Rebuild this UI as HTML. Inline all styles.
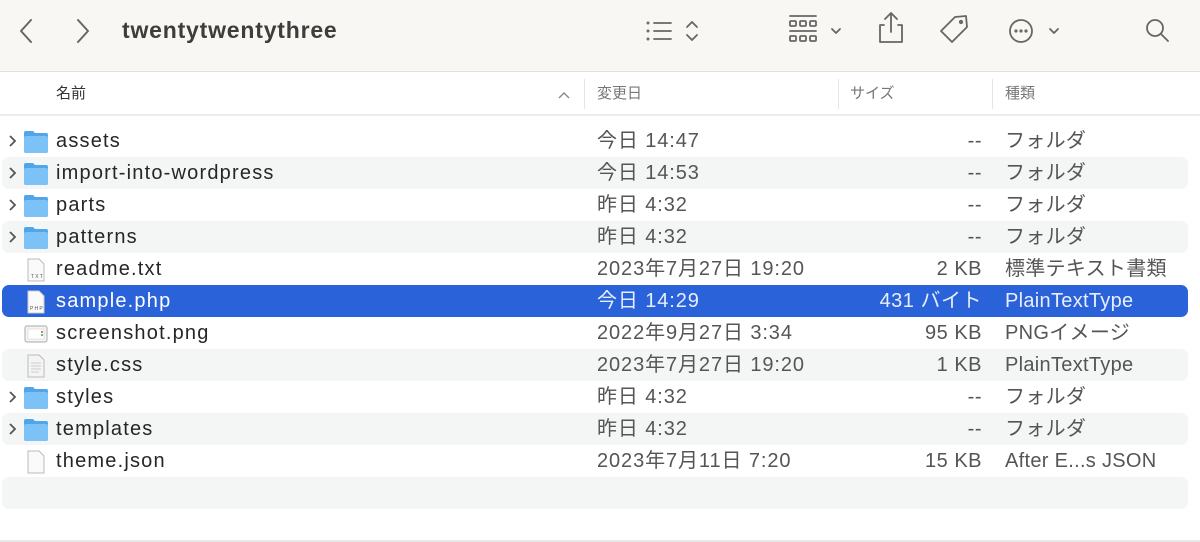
<!DOCTYPE html>
<html><head><meta charset="utf-8">
<style>
*{margin:0;padding:0;box-sizing:border-box}
body{width:1200px;height:542px;background:#fff;font-family:"Liberation Sans","Noto Sans CJK JP",sans-serif;position:relative;overflow:hidden;color:#262626}
.tb{position:absolute;left:0;top:0;width:1200px;height:72px;background:#f9f7f3;border-bottom:1px solid #e2e0dc}
.title{position:absolute;left:122px;top:15px;font-size:23px;letter-spacing:0.8px;font-weight:bold;color:#3d3d3d;line-height:30px}
.hdr{position:absolute;left:0;top:73px;width:1200px;height:43px;border-bottom:2px solid #ececec;font-size:15px}
.hdr span{position:absolute;top:1px;line-height:40px}
.sep{position:absolute;top:6px;width:1px;height:30px;background:#e4e4e4}
.row{position:absolute;left:2px;width:1186px;height:32px;border-radius:7px;font-size:20px;letter-spacing:1.2px}
.row.g{background:#f4f5f5}
.row.sel{background:#2a62d9;color:#fff}
.row span{position:absolute;top:0;line-height:32px;height:32px;white-space:nowrap}
.n{left:54px}.d{left:595px;color:#555;letter-spacing:0.9px}.s{right:206px;color:#555;text-align:right;letter-spacing:0.5px}.k{left:1003px;color:#555;letter-spacing:0.3px}
.sel .d,.sel .s,.sel .k{color:#e8eefc}
.chev{position:absolute;left:6px;top:9px}
.ic{position:absolute;left:21px;top:5px}
</style></head><body>
<div class="tb">
<svg style="position:absolute;left:0;top:0" width="1200" height="72" fill="none" stroke="#666" stroke-width="2" stroke-linecap="round" stroke-linejoin="round">
<path d="M31 20 L21 31 L31 42"/>
<path d="M78 20 L88 31 L78 42"/>
<g stroke-width="1.8"><circle cx="648" cy="23" r="0.6"/><circle cx="648" cy="31" r="0.6"/><circle cx="648" cy="39" r="0.6"/>
<path d="M654 23H671M654 31H671M654 39H671"/>
<path d="M687 27L692 22L697 27M687 35L692 40L697 35"/>
<path d="M790 16H816"/><rect x="790" y="21" width="6" height="5" rx="1"/><rect x="800" y="21" width="6" height="5" rx="1"/><rect x="810" y="21" width="6" height="5" rx="1"/>
<path d="M790 31H816"/><rect x="790" y="36" width="6" height="5" rx="1"/><rect x="800" y="36" width="6" height="5" rx="1"/><rect x="810" y="36" width="6" height="5" rx="1"/>
<path d="M832 29L836 33L840 29"/>
<path d="M884 25H880V42H902V25H898M891 32V14M885 19L891 13L897 19"/>
<path d="M955 17L966 16L967 27L952 42L941 31Z"/><circle cx="961" cy="22" r="1.2"/>
<circle cx="1021" cy="31" r="11"/><circle cx="1016" cy="31" r="0.7"/><circle cx="1021" cy="31" r="0.7"/><circle cx="1026" cy="31" r="0.7"/>
<path d="M1050 29L1054 33L1058 29"/>
<circle cx="1155" cy="28" r="8"/><path d="M1161 34L1168 41"/></g>
</svg>
<div class="title">twentytwentythree</div>
</div>
<div class="hdr">
<span style="left:56px;color:#333">名前</span>
<svg style="position:absolute;left:557px;top:17px" width="14" height="10" fill="none" stroke="#888" stroke-width="1.4"><path d="M2 8L7 3L12 8"/></svg>
<div class="sep" style="left:584px"></div><span style="left:597px;color:#777">変更日</span>
<div class="sep" style="left:838px"></div><span style="left:850px;color:#777">サイズ</span>
<div class="sep" style="left:992px"></div><span style="left:1005px;color:#777">種類</span>
</div>

<div class="row" style="top:125px"><svg class="chev" width="10" height="14" fill="none" stroke="#555" stroke-width="1.8"><path d="M2 2L7 7L2 12"/></svg><svg class="ic" width="26" height="24"><path d="M1 3Q1 1 3 1H10L12 3H23Q25 3 25 5V21Q25 23 23 23H3Q1 23 1 21Z" fill="#4fa6e8"/><rect x="1" y="6" width="24" height="17" rx="2" fill="#7cc2f6"/></svg><span class="n">assets</span><span class="d">今日 14:47</span><span class="s">--</span><span class="k">フォルダ</span></div>
<div class="row g" style="top:157px"><svg class="chev" width="10" height="14" fill="none" stroke="#555" stroke-width="1.8"><path d="M2 2L7 7L2 12"/></svg><svg class="ic" width="26" height="24"><path d="M1 3Q1 1 3 1H10L12 3H23Q25 3 25 5V21Q25 23 23 23H3Q1 23 1 21Z" fill="#4fa6e8"/><rect x="1" y="6" width="24" height="17" rx="2" fill="#7cc2f6"/></svg><span class="n">import-into-wordpress</span><span class="d">今日 14:53</span><span class="s">--</span><span class="k">フォルダ</span></div>
<div class="row" style="top:189px"><svg class="chev" width="10" height="14" fill="none" stroke="#555" stroke-width="1.8"><path d="M2 2L7 7L2 12"/></svg><svg class="ic" width="26" height="24"><path d="M1 3Q1 1 3 1H10L12 3H23Q25 3 25 5V21Q25 23 23 23H3Q1 23 1 21Z" fill="#4fa6e8"/><rect x="1" y="6" width="24" height="17" rx="2" fill="#7cc2f6"/></svg><span class="n">parts</span><span class="d">昨日 4:32</span><span class="s">--</span><span class="k">フォルダ</span></div>
<div class="row g" style="top:221px"><svg class="chev" width="10" height="14" fill="none" stroke="#555" stroke-width="1.8"><path d="M2 2L7 7L2 12"/></svg><svg class="ic" width="26" height="24"><path d="M1 3Q1 1 3 1H10L12 3H23Q25 3 25 5V21Q25 23 23 23H3Q1 23 1 21Z" fill="#4fa6e8"/><rect x="1" y="6" width="24" height="17" rx="2" fill="#7cc2f6"/></svg><span class="n">patterns</span><span class="d">昨日 4:32</span><span class="s">--</span><span class="k">フォルダ</span></div>
<div class="row" style="top:253px"><svg class="ic" width="26" height="24"><path d="M5 1H16L21 6V23H5Z" fill="#fafafa" stroke="#bbb"/><text x="8" y="20" font-size="5" fill="#555" font-family="Liberation Sans">TXT</text></svg><span class="n">readme.txt</span><span class="d">2023年7月27日 19:20</span><span class="s">2 KB</span><span class="k">標準テキスト書類</span></div>
<div class="row sel" style="top:285px"><svg class="ic" width="26" height="24"><path d="M5 1H16L21 6V23H5Z" fill="#fafafa" stroke="#ccc"/><text x="7" y="20" font-size="5" fill="#555" font-family="Liberation Sans">PHP</text></svg><span class="n">sample.php</span><span class="d">今日 14:29</span><span class="s">431 バイト</span><span class="k">PlainTextType</span></div>
<div class="row" style="top:317px"><svg class="ic" width="26" height="24"><rect x="2" y="4" width="22" height="16" rx="2" fill="#f4f4f4" stroke="#aaa"/><rect x="5" y="7" width="16" height="10" fill="#fff" stroke="#ccc" stroke-width=".5"/><circle cx="19" cy="10" r="1" fill="#d44"/><circle cx="19" cy="13" r="1" fill="#3a3"/></svg><span class="n">screenshot.png</span><span class="d">2022年9月27日 3:34</span><span class="s">95 KB</span><span class="k">PNGイメージ</span></div>
<div class="row g" style="top:349px"><svg class="ic" width="26" height="24"><path d="M5 1H16L21 6V23H5Z" fill="#f4f4f4" stroke="#bbb"/><path d="M8 9H18M8 12H18M8 15H18M8 18H16" stroke="#ccc"/></svg><span class="n">style.css</span><span class="d">2023年7月27日 19:20</span><span class="s">1 KB</span><span class="k">PlainTextType</span></div>
<div class="row" style="top:381px"><svg class="chev" width="10" height="14" fill="none" stroke="#555" stroke-width="1.8"><path d="M2 2L7 7L2 12"/></svg><svg class="ic" width="26" height="24"><path d="M1 3Q1 1 3 1H10L12 3H23Q25 3 25 5V21Q25 23 23 23H3Q1 23 1 21Z" fill="#4fa6e8"/><rect x="1" y="6" width="24" height="17" rx="2" fill="#7cc2f6"/></svg><span class="n">styles</span><span class="d">昨日 4:32</span><span class="s">--</span><span class="k">フォルダ</span></div>
<div class="row g" style="top:413px"><svg class="chev" width="10" height="14" fill="none" stroke="#555" stroke-width="1.8"><path d="M2 2L7 7L2 12"/></svg><svg class="ic" width="26" height="24"><path d="M1 3Q1 1 3 1H10L12 3H23Q25 3 25 5V21Q25 23 23 23H3Q1 23 1 21Z" fill="#4fa6e8"/><rect x="1" y="6" width="24" height="17" rx="2" fill="#7cc2f6"/></svg><span class="n">templates</span><span class="d">昨日 4:32</span><span class="s">--</span><span class="k">フォルダ</span></div>
<div class="row" style="top:445px"><svg class="ic" width="26" height="24"><path d="M5 1H16L21 6V23H5Z" fill="#fafafa" stroke="#bbb"/></svg><span class="n">theme.json</span><span class="d">2023年7月11日 7:20</span><span class="s">15 KB</span><span class="k">After E...s JSON</span></div>
<div class="row g" style="top:477px"></div>
<div style="position:absolute;left:0;top:540px;width:1200px;height:2px;background:#e8e8e8"></div>
</body></html>
